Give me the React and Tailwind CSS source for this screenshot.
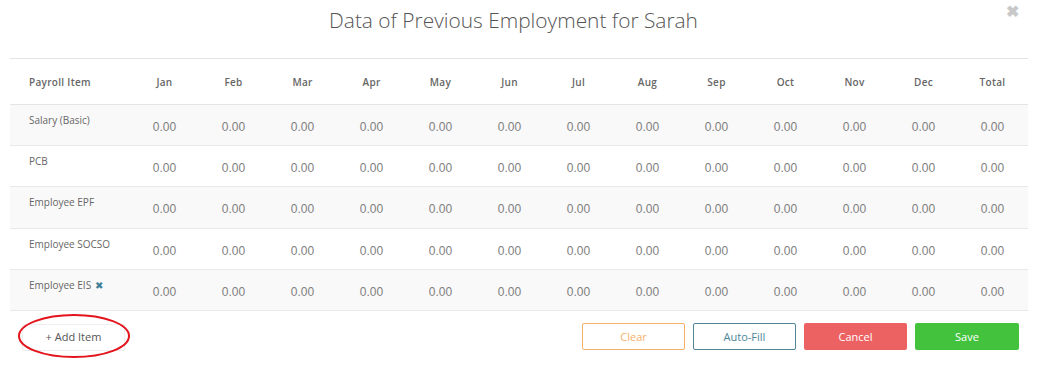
const months = ["Jan", "Feb", "Mar", "Apr", "May", "Jun", "Jul", "Aug", "Sep", "Oct", "Nov", "Dec", "Total"];

const items = [
    { name: "Salary (Basic)" },
    { name: "PCB" },
    { name: "Employee EPF" },
    { name: "Employee SOCSO" },
    { name: "Employee EIS", removable: true },
];

export default function App() {
    return (
        <div
            className="relative w-[1038px] h-[367px] bg-white overflow-hidden"
            style={{ fontFamily: '"Open Sans", sans-serif' }}
        >
            {/* HEADER */}
            <div className="h-[58px] flex items-start justify-center pt-[5px] pr-[11px]">
                <h1 className="text-[20.9px] font-light text-[#555] leading-[30px]">
                    Data of Previous Employment for Sarah
                </h1>
            </div>
            <button className="absolute right-[19px] top-[3px] text-[#c8c8c8] text-[16px] leading-none font-bold">
                ✖
            </button>

            {/* TABLE */}
            <div className="mx-[10px] border-t border-[#e4e4e4]">
                <div className="grid grid-cols-[120px_repeat(13,69px)] h-[46px] items-center pt-[2px] border-b border-[#e4e4e4] text-[10px] font-semibold tracking-[0.3px] text-[#666]">
                    <div className="pl-[19px]">Payroll Item</div>
                    {months.map((m) => (
                        <div key={m} className="text-center">{m}</div>
                    ))}
                </div>

                {items.map((item, i) => (
                    <div
                        key={item.name}
                        className={
                            "grid grid-cols-[120px_repeat(13,69px)] h-[41.2px] border-b border-[#e8e8e8] " +
                            (i % 2 === 0 ? "bg-[#f9f9f9]" : "bg-white")
                        }
                    >
                        <div className="pl-[19px] pt-[8px] text-[10px] text-[#666] flex items-start gap-[4px]">
                            <span>{item.name}</span>
                            {item.removable && (
                                <span className="text-[#3f7f9a] text-[10px] leading-[15px]">✖</span>
                            )}
                        </div>
                        {months.map((m) => (
                            <div
                                key={m}
                                className="text-center pt-[13px] text-[12px] text-[#808080]"
                                style={{ fontFamily: '"Liberation Sans", Arial, sans-serif' }}
                            >
                                0.00
                            </div>
                        ))}
                    </div>
                ))}
            </div>

            {/* FOOTER */}
            <div className="flex items-center justify-between mt-[12px] pl-[22px] pr-[19px]">
                <div className="relative">
                    <button className="w-[103px] h-[27px] border border-[#eee] rounded-[2px] text-[11px] text-[#555]">
                        + Add Item
                    </button>
                    <svg
                        className="absolute left-[-5px] top-[-11px]"
                        width="114"
                        height="48"
                        viewBox="0 0 114 48"
                    >
                        <ellipse cx="57" cy="24" rx="55" ry="21" fill="none" stroke="#e3141c" strokeWidth="2" />
                    </svg>
                </div>

                <div className="flex gap-[8px] text-[11px]">
                    <button className="w-[103px] h-[27px] border border-[#f5b06a] text-[#f5b06a] rounded-[2px] bg-white">
                        Clear
                    </button>
                    <button className="w-[103px] h-[27px] border border-[#4e8698] text-[#4e8698] rounded-[2px] bg-white">
                        Auto-Fill
                    </button>
                    <button className="w-[103px] h-[27px] bg-[#ec6262] text-white rounded-[2px]">
                        Cancel
                    </button>
                    <button className="w-[104px] h-[27px] bg-[#42c23d] text-white rounded-[2px]">
                        Save
                    </button>
                </div>
            </div>
        </div>
    );
}
